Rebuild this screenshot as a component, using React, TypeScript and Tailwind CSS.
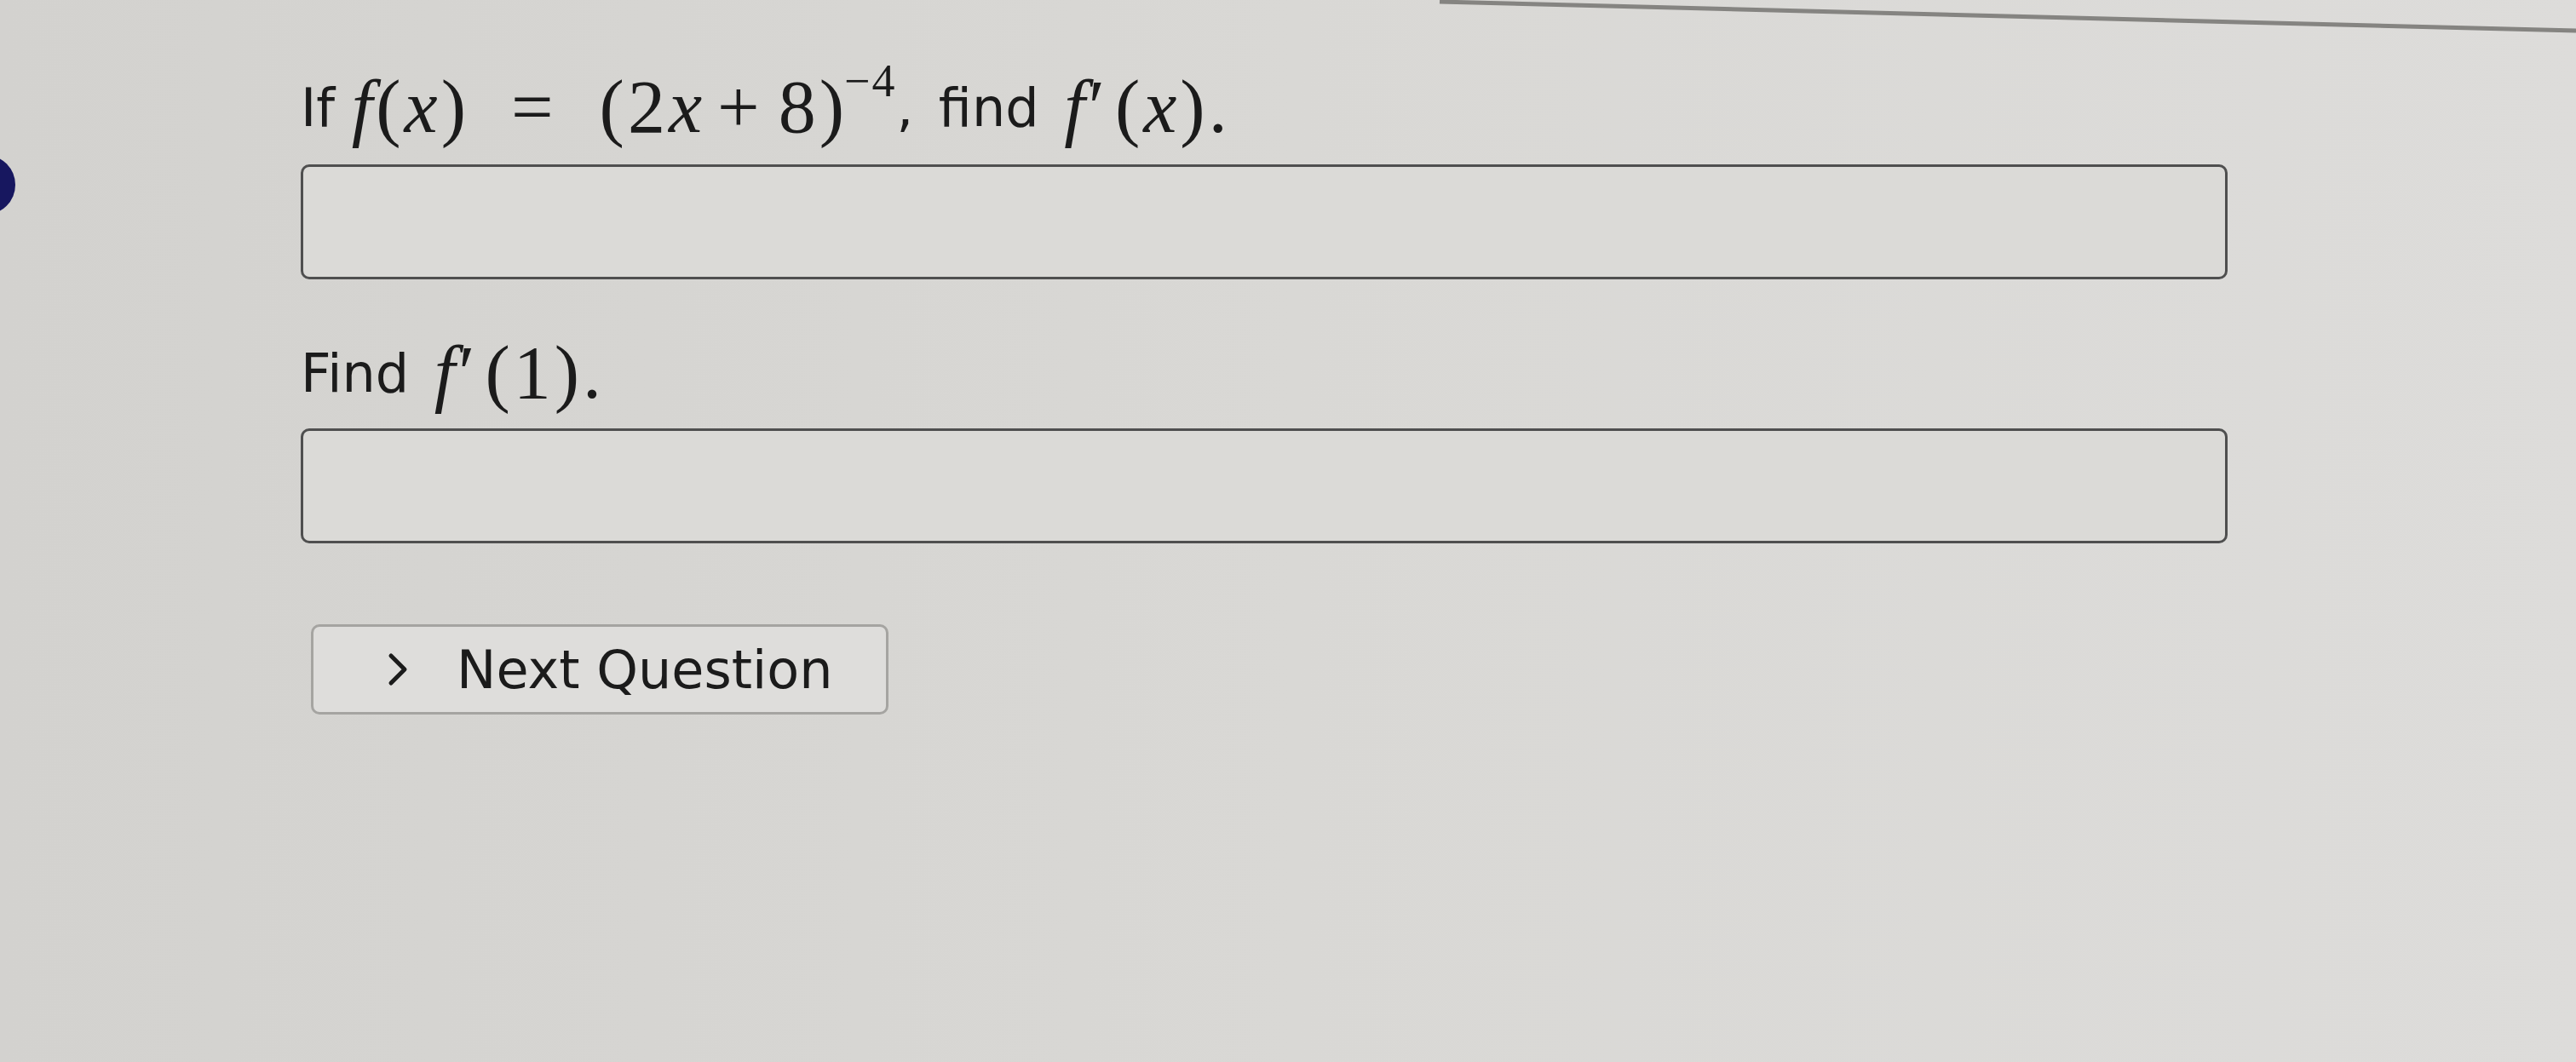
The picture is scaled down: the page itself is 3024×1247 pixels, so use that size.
const sans = "font-['DejaVu_Sans','Verdana',sans-serif]"
const serif = "font-['Liberation_Serif','Times_New_Roman',serif]"

function MathText({ children, className = "" }: { children: React.ReactNode; className?: string }) {
  return <span className={`${serif} text-[88px] tracking-[4px] text-[#1b1b1b] ${className}`}>{children}</span>
}

// f′ followed by a parenthesised argument, spaced like the typeset math
function FPrime({ arg }: { arg: React.ReactNode }) {
  return (
    <MathText className="ml-[10px]">
      <i>f</i>
      <span className="mr-[8px]">′</span>({arg}).
    </MathText>
  )
}

function AnswerBox() {
  return <div className="h-[135px] w-[2262px] rounded-[10px] border-[3px] border-[#4f4f4f] bg-[#dbdad7]" />
}

export default function App() {
  return (
    <div className="relative h-[1247px] w-full overflow-hidden bg-linear-to-r from-[#d3d2cf] via-[#d9d8d5] to-[#dddcda]">
      {/* edge of the previous panel */}
      <svg className="pointer-events-none absolute left-0 top-0" width="3024" height="60">
        <line x1="1690" y1="2" x2="3024" y2="36" stroke="#858481" strokeWidth="5" />
      </svg>
      {/* side marker, cut off by the window edge */}
      <div className="absolute left-[-52px] top-[182px] h-[70px] w-[70px] rounded-full bg-[#17175f]" />

      <div className={`flex flex-col items-start pl-[353px] pt-[86px] ${sans} text-[62px] text-[#1b1b1b]`}>
        <p className="flex h-[80px] items-center whitespace-pre">
          <span>If </span>
          <MathText>
            <i>f</i>(<i>x</i>)<span className="ml-[49px] mr-[50px]">=</span>(2<i>x</i>
            <span className="ml-[14px] mr-[18px]">+</span>8)
            <sup className="relative top-[-42px] ml-[-4px] text-[54px] tracking-[2px]">−4</sup>
          </MathText>
          <span>, </span>
          <span className="ml-[10px]">find </span>
          <FPrime arg={<i>x</i>} />
        </p>

        <div className="mt-[27px]">
          <AnswerBox />
        </div>

        <p className="mt-[70px] flex h-[80px] items-center whitespace-pre">
          <span>Find </span>
          <FPrime arg="1" />
        </p>

        <div className="mt-[25px]">
          <AnswerBox />
        </div>

        <button className="ml-[12px] mt-[95px] flex h-[106px] w-[678px] items-center rounded-[10px] border-[3px] border-[#a5a4a1] bg-[#dedddb] pl-[86px] text-[62px] text-[#1b1b1b]">
          <svg className="mr-[56px]" width="26" height="40" viewBox="0 0 26 40" fill="none">
            <polyline points="5,4 21,20 5,36" stroke="#1b1b1b" strokeWidth="5" strokeLinecap="round" strokeLinejoin="round" />
          </svg>
          <span>Next Question</span>
        </button>
      </div>
    </div>
  )
}
